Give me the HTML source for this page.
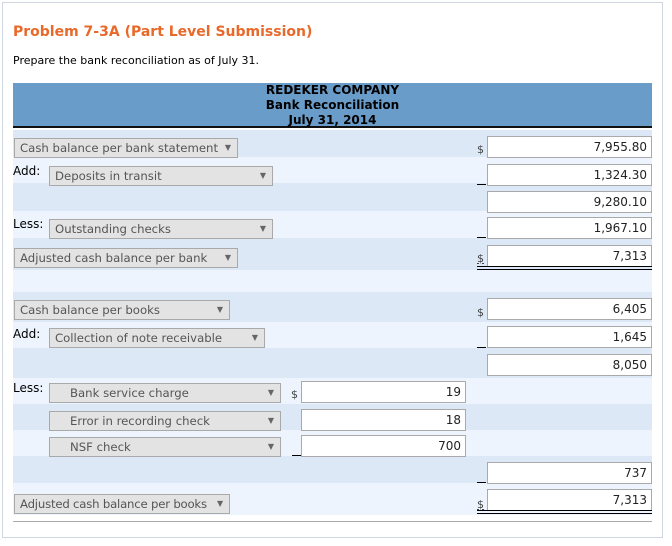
<!DOCTYPE html>
<html><head><meta charset="utf-8"><style>
*{margin:0;padding:0;box-sizing:border-box}
body{width:672px;height:546px;background:#fff;font-family:"DejaVu Sans","Liberation Sans",sans-serif;font-size:12px;color:#000;position:relative;overflow:hidden}
.a{position:absolute}
.frame{left:2px;top:2px;width:661px;height:536px;border:1px solid #cfd6e0}
.row{position:absolute;left:13px;width:639px}
.d{background:#dde8f7}.l{background:#edf4fd}
.sel{position:absolute;height:20px;background:#e3e3e3;border:1px solid #a9a9a9;color:#555;font-size:11.7px;line-height:18px;padding-left:5px;white-space:nowrap}
.sel:after{content:"▼";position:absolute;right:6px;top:0;font-size:8px;color:#666}
.in{position:absolute;height:22px;background:#fff;border:1px solid #a9a9a9;text-align:right;padding-right:4px;line-height:20px;font-size:12px;color:#222}
.lab{position:absolute;font-size:12px}
.dol{position:absolute;font-size:11px;color:#444}
.us{position:absolute;height:1px;background:#000;width:9px}
.dbl{position:absolute;height:4px;border-top:1px solid #000;border-bottom:1px solid #000}
</style></head><body>
<div class="a frame"></div>
<div class="a" style="left:13px;top:24px;font-size:14px;font-weight:bold;color:#e8692a">Problem 7-3A (Part Level Submission)</div>
<div class="a" style="left:13px;top:54px;font-size:11px">Prepare the bank reconciliation as of July 31.</div>
<div class="a" style="left:13px;top:83px;width:639px;height:45px;background:#6a9cc9;border-bottom:2px solid #111;text-align:center;font-weight:bold;line-height:15px;padding-top:0px;font-size:12px">REDEKER COMPANY<br>Bank Reconciliation<br>July 31, 2014</div>

<div class="row d" style="top:130px;height:27px"></div>
<div class="row l" style="top:157px;height:26px"></div>
<div class="row d" style="top:183px;height:28px"></div>
<div class="row l" style="top:211px;height:27px"></div>
<div class="row d" style="top:238px;height:32px"></div>
<div class="row l" style="top:270px;height:22px"></div>
<div class="row d" style="top:292px;height:30px"></div>
<div class="row l" style="top:322px;height:26px"></div>
<div class="row d" style="top:348px;height:30px"></div>
<div class="row l" style="top:378px;height:26px"></div>
<div class="row d" style="top:404px;height:26px"></div>
<div class="row l" style="top:430px;height:26px"></div>
<div class="row d" style="top:456px;height:27px"></div>
<div class="row l" style="top:483px;height:32px"></div>
<div class="a" style="left:13px;top:521px;width:639px;height:1px;background:#aaa"></div>

<div class="sel" style="left:14px;top:138px;width:224px">Cash balance per bank statement</div>
<div class="dol" style="left:477px;top:143px">$</div>
<div class="in" style="left:487px;top:136px;width:165px">7,955.80</div>

<div class="lab" style="left:13px;top:164px">Add:</div>
<div class="sel" style="left:49px;top:166px;width:224px">Deposits in transit</div>
<div class="us" style="left:477px;top:184px"></div>
<div class="in" style="left:487px;top:164px;width:165px">1,324.30</div>

<div class="in" style="left:487px;top:191px;width:165px">9,280.10</div>

<div class="lab" style="left:13px;top:217px">Less:</div>
<div class="sel" style="left:49px;top:219px;width:224px">Outstanding checks</div>
<div class="us" style="left:477px;top:237px"></div>
<div class="in" style="left:487px;top:217px;width:165px">1,967.10</div>

<div class="sel" style="left:14px;top:248px;width:224px">Adjusted cash balance per bank</div>
<div class="dol" style="left:477px;top:252px;text-decoration:underline">$</div>
<div class="in" style="left:487px;top:245px;width:165px">7,313</div>
<div class="dbl" style="left:477px;top:266px;width:175px"></div>

<div class="sel" style="left:14px;top:300px;width:216px">Cash balance per books</div>
<div class="dol" style="left:477px;top:306px">$</div>
<div class="in" style="left:487px;top:298px;width:165px">6,405</div>

<div class="lab" style="left:13px;top:327px">Add:</div>
<div class="sel" style="left:49px;top:328px;width:216px">Collection of note receivable</div>
<div class="us" style="left:477px;top:347px"></div>
<div class="in" style="left:487px;top:326px;width:165px">1,645</div>

<div class="in" style="left:487px;top:354px;width:165px">8,050</div>

<div class="lab" style="left:13px;top:381px">Less:</div>
<div class="sel" style="left:49px;top:383px;width:232px;padding-left:20px">Bank service charge</div>
<div class="dol" style="left:291px;top:388px">$</div>
<div class="in" style="left:301px;top:381px;width:165px">19</div>

<div class="sel" style="left:49px;top:411px;width:232px;padding-left:20px">Error in recording check</div>
<div class="in" style="left:301px;top:409px;width:165px">18</div>

<div class="sel" style="left:49px;top:437px;width:232px;padding-left:20px">NSF check</div>
<div class="us" style="left:292px;top:455px"></div>
<div class="in" style="left:301px;top:435px;width:165px">700</div>

<div class="us" style="left:477px;top:482px"></div>
<div class="in" style="left:487px;top:462px;width:165px">737</div>

<div class="sel" style="left:14px;top:494px;width:216px;letter-spacing:-0.2px">Adjusted cash balance per books</div>
<div class="dol" style="left:477px;top:498px;text-decoration:underline">$</div>
<div class="in" style="left:487px;top:489px;width:165px">7,313</div>
<div class="dbl" style="left:477px;top:510px;width:175px"></div>
</body></html>
